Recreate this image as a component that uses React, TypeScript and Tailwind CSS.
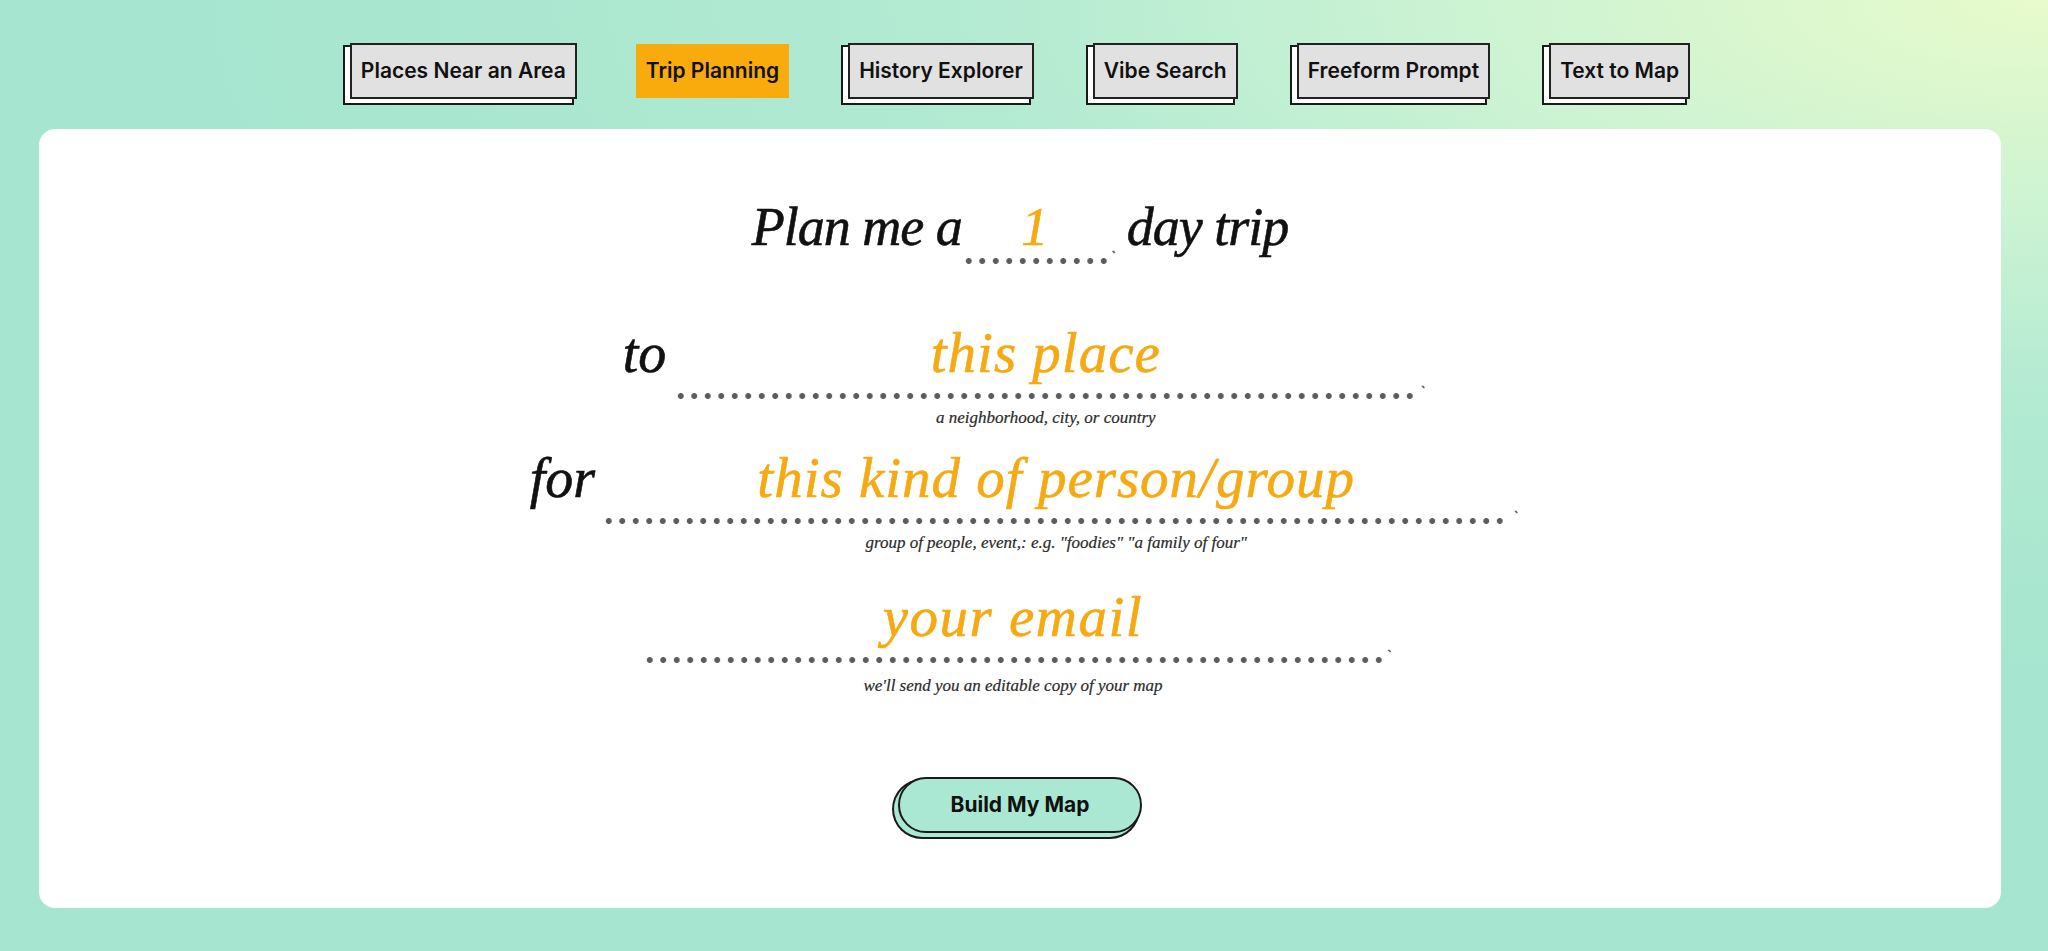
import React from "react";

const tabs = [
  "Places Near an Area",
  "Trip Planning",
  "History Explorer",
  "Vibe Search",
  "Freeform Prompt",
  "Text to Map",
];

function DotLine() {
  return (
    <div className="relative h-[8px] w-full bg-[radial-gradient(circle,#5c5c5c_2.6px,transparent_3.3px)] bg-[length:13.5px_8px] bg-repeat-x">
      <span className="absolute right-[-8px] top-[-6px] text-[12px] leading-none text-[#555] font-['Liberation_Sans',sans-serif]">
        `
      </span>
    </div>
  );
}

function Hint({ children, className }: { children: React.ReactNode; className: string }) {
  return (
    <div
      className={`whitespace-nowrap font-['Liberation_Serif',serif] text-[17px] italic leading-[18px] text-[#2a2a2a] [-webkit-text-stroke:0.2px_currentcolor] ${className}`}
    >
      {children}
    </div>
  );
}

export default function App() {
  return (
    <div className="flex min-h-screen w-full flex-col items-center bg-[radial-gradient(ellipse_90%_70%_at_100%_0%,#e8fbcb_0%,#c9f2d3_35%,#b2ead2_60%,#a6e5cf_100%)] pb-[43px] pl-[39px] pr-[47px] pt-[43px]">
      {/* Nav */}
      <nav className="flex items-center gap-[59px] font-['Inter',sans-serif]">
        {tabs.map((t) =>
          t === "Trip Planning" ? (
            <button
              key={t}
              className="h-[54px] bg-[#f9ab0e] px-[10px] text-[21px] font-semibold text-[#111]"
            >
              {t}
            </button>
          ) : (
            <button
              key={t}
              className="h-[56px] border-2 border-[#222] bg-[#e1e1e1] px-[9px] text-[21px] font-semibold text-[#111] shadow-[-5px_4px_0_0_#ffffff,-5px_4px_0_2px_#1a1a1a]"
            >
              {t}
            </button>
          )
        )}
      </nav>

      {/* Card */}
      <main className="mt-[30px] flex h-[779px] w-full flex-col items-center rounded-[16px] bg-white pt-[71px] font-['Liberation_Serif',serif] italic [-webkit-text-stroke:0.6px_currentcolor]">
        {/* Heading row */}
        <div className="flex items-baseline text-[54px] leading-[54px] tracking-[-1px] text-[#111]">
          <span>Plan me a</span>
          <div className="flex w-[145px] flex-col items-center">
            <div className="text-[54px] leading-[54px] text-[#f6a912]">1</div>
            <div className="mt-[3px] w-full">
              <DotLine />
            </div>
          </div>
          <span className="ml-[20px]">day trip</span>
        </div>

        {/* to */}
        <div className="mt-[60px] flex items-baseline text-[56px] leading-[56px] text-[#111]">
          <span className="mr-[8px]">to</span>
          <div className="flex w-[743px] flex-col items-center">
            <div className="text-[57px] tracking-[1px] text-[#f6a912]">this place</div>
            <div className="mt-[11px] w-full">
              <DotLine />
            </div>
            <Hint className="mt-[9px]">a neighborhood, city, or country</Hint>
          </div>
        </div>

        {/* for */}
        <div className="mt-[23px] flex items-baseline text-[56px] leading-[56px] text-[#111]">
          <span className="mr-[7px]">for</span>
          <div className="flex w-[908px] flex-col items-center">
            <div className="whitespace-nowrap text-[57px] tracking-[1px] text-[#f6a912]">this kind of person/group</div>
            <div className="mt-[11px] w-full">
              <DotLine />
            </div>
            <Hint className="mt-[9px]">group of people, event,: e.g. "foodies" "a family of four"</Hint>
          </div>
        </div>

        {/* email */}
        <div className="mr-[14px] mt-[37px] flex items-baseline text-[56px] leading-[56px] text-[#111]">
          <div className="flex w-[741px] flex-col items-center">
            <div className="text-[57px] tracking-[1.5px] text-[#f6a912]">your email</div>
            <div className="mt-[11px] w-full">
              <DotLine />
            </div>
            <Hint className="mt-[13px]">we'll send you an editable copy of your map</Hint>
          </div>
        </div>

        <button className="mt-[82px] h-[56px] w-[244px] rounded-full border-2 border-[#1a1a1a] bg-[#aae8d3] font-['Inter',sans-serif] text-[21px] font-bold not-italic text-[#111] [-webkit-text-stroke:0px] shadow-[-4px_4px_0_0_#aae8d3,-4px_4px_0_2px_#1a1a1a]">
          Build My Map
        </button>
      </main>
    </div>
  );
}
